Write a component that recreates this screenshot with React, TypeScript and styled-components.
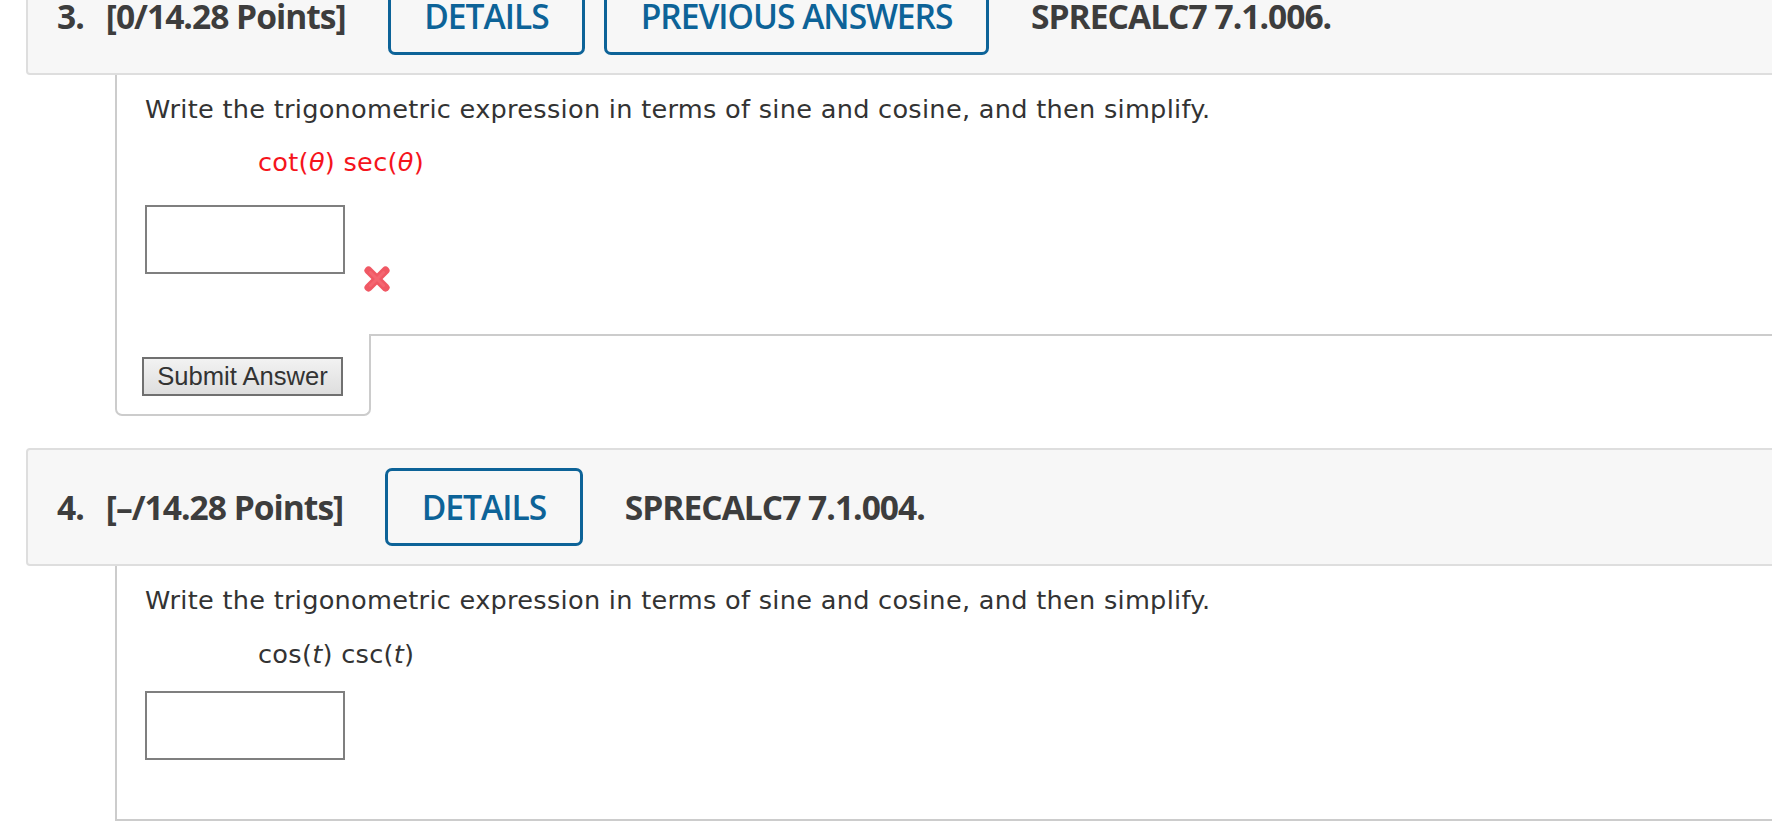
import React from "react";
import styled, { createGlobalStyle } from "styled-components";

const GlobalStyle = createGlobalStyle`
  html, body {
    margin: 0;
    padding: 0;
    background: #ffffff;
    overflow: hidden;
  }
`;

const Page = styled.div`
  width: 1900px;
  margin-top: -43px;
  display: flex;
  flex-direction: column;
`;

const Question = styled.section<{ $first?: boolean }>`
  display: flex;
  flex-direction: column;
  margin-top: ${(p) => (p.$first ? "0" : "32px")};
`;

const Header = styled.div`
  margin-left: 26px;
  box-sizing: border-box;
  height: 118px;
  background: #f7f7f7;
  border: 2px solid #dedede;
  border-radius: 4px;
  display: flex;
  align-items: center;
  gap: 42px;
  padding-left: 29px;
  font-family: "Open Sans", "Noto Sans", sans-serif;
  font-weight: 700;
  font-size: 33.6px;
  color: #3d3d3d;
  letter-spacing: -1px;
`;

const Title = styled.div`
  display: flex;
  white-space: nowrap;
`;

const QNum = styled.span`
  margin-right: 22px;
`;

const ButtonGroup = styled.div`
  display: flex;
  gap: 19px;
`;

const HeaderButton = styled.button`
  box-sizing: border-box;
  height: 78px;
  padding: 0 33.5px;
  background: transparent;
  border: 3px solid #0d6398;
  border-radius: 7px;
  color: #0d6398;
  font-family: "Open Sans", "Noto Sans", sans-serif;
  font-weight: 600;
  font-size: 33.6px;
  letter-spacing: -1px;
  cursor: pointer;
`;

const Source = styled.div`
  white-space: nowrap;
`;

const Body = styled.div`
  margin-left: 115px;
  display: flex;
  flex-direction: column;
`;

const BodyContent = styled.div<{ $closed?: boolean }>`
  border-left: 2px solid #cccccc;
  border-bottom: ${(p) => (p.$closed ? "2px solid #cccccc" : "none")};
  padding: 15px 0 ${(p) => (p.$closed ? "59px" : "60px")} 28px;
  font-family: Verdana, "DejaVu Sans", sans-serif;
  font-size: 25.6px;
  line-height: 38.4px;
  letter-spacing: 0.28px;
  color: #333333;
`;

const Prompt = styled.div`
  white-space: nowrap;
`;

const Expression = styled.div<{ $wrong?: boolean }>`
  margin-top: 15px;
  margin-left: 113px;
  color: ${(p) => (p.$wrong ? "#f5141c" : "#333333")};
  white-space: nowrap;
`;

const Var = styled.span`
  font-style: italic;
`;

const AnswerRow = styled.div<{ $gap: number }>`
  margin-top: ${(p) => p.$gap}px;
  display: flex;
  align-items: flex-end;
`;

const AnswerInput = styled.input`
  box-sizing: border-box;
  width: 200px;
  height: 69px;
  border: 2px solid #7f7f7f;
  background: #ffffff;
  outline: none;
  font-family: Verdana, "DejaVu Sans", sans-serif;
  font-size: 25.6px;
  padding: 0 8px;
`;

const WrongMark = styled.svg`
  width: 28px;
  height: 28px;
  margin-left: 18px;
  margin-bottom: -19px;
  flex: none;
`;

const Footer = styled.div`
  display: flex;
`;

const SubmitTab = styled.div`
  box-sizing: border-box;
  width: 256px;
  border-left: 2px solid #cccccc;
  border-right: 2px solid #cccccc;
  border-bottom: 2px solid #cccccc;
  border-radius: 0 0 7px 7px;
  padding: 23px 0 18px 25px;
`;

const Filler = styled.div`
  flex: 1;
  border-top: 2px solid #cccccc;
`;

const SubmitButton = styled.button`
  box-sizing: border-box;
  width: 201px;
  height: 39px;
  padding: 0;
  border: 2px solid #707070;
  background: linear-gradient(#f2f2f2, #dedede);
  color: #333333;
  font-family: Arial, "Liberation Sans", sans-serif;
  font-size: 25.6px;
  line-height: 1;
  cursor: pointer;
`;

const CrossIcon = () => (
  <WrongMark viewBox="0 0 28 28" aria-hidden="true">
    <g stroke="#ef4a57" strokeWidth="8" strokeLinecap="round" opacity="0.92">
      <line x1="5.5" y1="5.5" x2="22.5" y2="22.5" />
      <line x1="22.5" y1="5.5" x2="5.5" y2="22.5" />
    </g>
    <g stroke="#f7707b" strokeWidth="3" strokeLinecap="round" opacity="0.6">
      <line x1="7.5" y1="7.5" x2="20.5" y2="20.5" />
      <line x1="20.5" y1="7.5" x2="7.5" y2="20.5" />
    </g>
  </WrongMark>
);

export default function App() {
  return (
    <>
      <GlobalStyle />
      <Page>
        <Question $first>
          <Header>
            <Title>
              <QNum>3.</QNum>
              <span>[0/14.28 Points]</span>
            </Title>
            <ButtonGroup>
              <HeaderButton>DETAILS</HeaderButton>
              <HeaderButton>PREVIOUS ANSWERS</HeaderButton>
            </ButtonGroup>
            <Source>SPRECALC7 7.1.006.</Source>
          </Header>
          <Body>
            <BodyContent>
              <Prompt>
                Write the trigonometric expression in terms of sine and cosine, and then simplify.
              </Prompt>
              <Expression $wrong>
                cot(<Var>θ</Var>) sec(<Var>θ</Var>)
              </Expression>
              <AnswerRow $gap={23.5}>
                <AnswerInput type="text" aria-label="answer" />
                <CrossIcon />
              </AnswerRow>
            </BodyContent>
            <Footer>
              <SubmitTab>
                <SubmitButton>Submit Answer</SubmitButton>
              </SubmitTab>
              <Filler />
            </Footer>
          </Body>
        </Question>

        <Question>
          <Header>
            <Title>
              <QNum>4.</QNum>
              <span>[–/14.28 Points]</span>
            </Title>
            <ButtonGroup>
              <HeaderButton>DETAILS</HeaderButton>
            </ButtonGroup>
            <Source>SPRECALC7 7.1.004.</Source>
          </Header>
          <Body>
            <BodyContent $closed>
              <Prompt>
                Write the trigonometric expression in terms of sine and cosine, and then simplify.
              </Prompt>
              <Expression>
                cos(<Var>t</Var>) csc(<Var>t</Var>)
              </Expression>
              <AnswerRow $gap={17.5}>
                <AnswerInput type="text" aria-label="answer" />
              </AnswerRow>
            </BodyContent>
          </Body>
        </Question>
      </Page>
    </>
  );
}
